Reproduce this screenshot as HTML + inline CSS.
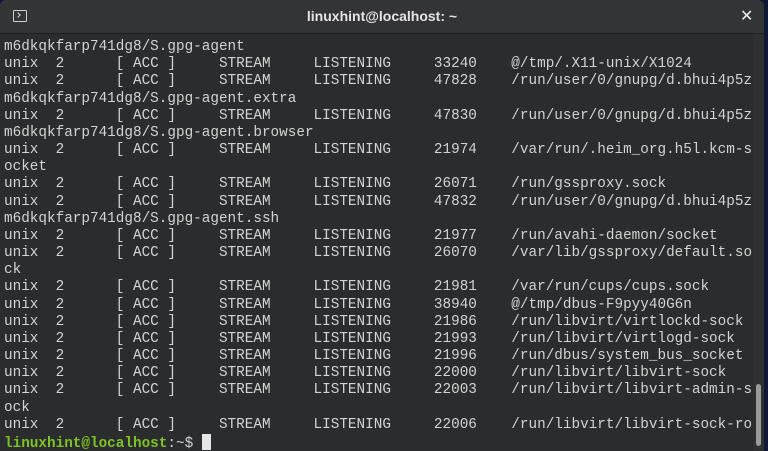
<!DOCTYPE html>
<html><head><meta charset="utf-8"><style>
html,body{margin:0;padding:0;width:768px;height:451px;overflow:hidden;background:#0d1a33;}
.win{position:absolute;left:0;top:0;width:764px;height:451px;background:#2b2c2d;border-radius:6px 6px 0 0;overflow:hidden;}
.title{position:absolute;left:0;top:0;width:764px;height:33px;background:#323536;border-bottom:1px solid #1e1f20;}
.title .t{position:absolute;left:0;width:764px;top:8px;text-align:center;color:#e4e4e4;font:bold 14px "Liberation Sans",sans-serif;}
.icon{position:absolute;left:13px;top:10px;width:12px;height:10px;border:1.5px solid #cfcfcf;border-radius:1px;}
.icon:after{content:"";position:absolute;left:2px;top:2px;width:3px;height:3px;border-right:1px solid #cfcfcf;border-bottom:1px solid #cfcfcf;transform:rotate(-45deg);}
.x{position:absolute;left:740px;top:6px;color:#eee;font:bold 16px "DejaVu Sans",sans-serif;}
pre{position:absolute;left:4px;top:39px;margin:0;font:14.33px/17.17px "Liberation Mono",monospace;color:#d3d3d3;letter-spacing:0;}
.g{color:#7ec326;font-weight:bold;}
.cur{display:inline-block;width:9px;height:16px;background:#e6e6e6;vertical-align:-3px;}
.trough{position:absolute;left:753px;top:34px;width:11px;height:417px;background:#2e3031;}
.thumb{position:absolute;left:756px;top:384px;width:5px;height:62px;background:#9a9a9a;border-radius:3px;}
</style></head><body>
<div class="win">
<div class="title"><div class="icon"></div><div class="t">linuxhint@localhost: ~</div><div class="x">✕</div></div>
<div class="trough"></div><div class="thumb"></div>
<pre>m6dkqkfarp741dg8/S.gpg-agent
unix  2      [ ACC ]     STREAM     LISTENING     33240    @/tmp/.X11-unix/X1024
unix  2      [ ACC ]     STREAM     LISTENING     47828    /run/user/0/gnupg/d.bhui4p5z
m6dkqkfarp741dg8/S.gpg-agent.extra
unix  2      [ ACC ]     STREAM     LISTENING     47830    /run/user/0/gnupg/d.bhui4p5z
m6dkqkfarp741dg8/S.gpg-agent.browser
unix  2      [ ACC ]     STREAM     LISTENING     21974    /var/run/.heim_org.h5l.kcm-s
ocket
unix  2      [ ACC ]     STREAM     LISTENING     26071    /run/gssproxy.sock
unix  2      [ ACC ]     STREAM     LISTENING     47832    /run/user/0/gnupg/d.bhui4p5z
m6dkqkfarp741dg8/S.gpg-agent.ssh
unix  2      [ ACC ]     STREAM     LISTENING     21977    /run/avahi-daemon/socket
unix  2      [ ACC ]     STREAM     LISTENING     26070    /var/lib/gssproxy/default.so
ck
unix  2      [ ACC ]     STREAM     LISTENING     21981    /var/run/cups/cups.sock
unix  2      [ ACC ]     STREAM     LISTENING     38940    @/tmp/dbus-F9pyy40G6n
unix  2      [ ACC ]     STREAM     LISTENING     21986    /run/libvirt/virtlockd-sock
unix  2      [ ACC ]     STREAM     LISTENING     21993    /run/libvirt/virtlogd-sock
unix  2      [ ACC ]     STREAM     LISTENING     21996    /run/dbus/system_bus_socket
unix  2      [ ACC ]     STREAM     LISTENING     22000    /run/libvirt/libvirt-sock
unix  2      [ ACC ]     STREAM     LISTENING     22003    /run/libvirt/libvirt-admin-s
ock
unix  2      [ ACC ]     STREAM     LISTENING     22006    /run/libvirt/libvirt-sock-ro
<span class="g">linuxhint@localhost</span>:~$ <span class="cur"></span></pre>
</div>
</body></html>
